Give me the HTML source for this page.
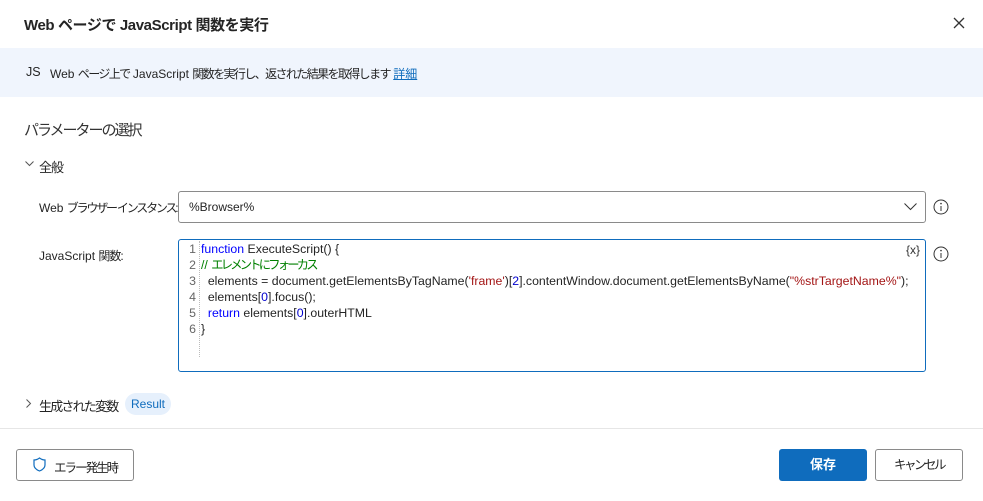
<!DOCTYPE html>
<html><head><meta charset="utf-8"><style>
*{box-sizing:border-box;margin:0;padding:0}
body{width:983px;height:501px;background:#fff;font-family:"Liberation Sans","Noto Sans CJK JP",sans-serif;color:#242424;position:relative;overflow:hidden;font-size:12px}
.a{position:absolute;white-space:nowrap}
.code div{height:16px;line-height:16px}
.ln{display:inline-block;width:18px;text-align:right;color:#666;padding-right:5px;box-sizing:content-box}
.kw{color:#0000ff}.str{color:#a31515}.cm{color:#008000}.num{color:#0000cc}
.j{letter-spacing:-1.6px}
</style></head><body>
<div class="a" style="left:24px;top:14px;font-size:15px;font-weight:bold;letter-spacing:-0.4px">Web ページで JavaScript 関数を実行</div>
<svg class="a" style="left:953px;top:17px" width="12" height="12"><path d="M1 1L11 11M11 1L1 11" stroke="#333" stroke-width="1.3"/></svg>
<div class="a" style="left:0;top:48px;width:983px;height:49px;background:#f0f5fd"></div>
<div class="a" style="left:26px;top:65px;font-size:12.5px">JS</div>
<div class="a" style="left:50px;top:65px;font-size:12px">Web <span class="j">ページ上で</span> JavaScript <span class="j">関数を実行し、返された結果を取得します</span> <span style="color:#0f6cbd;text-decoration:underline">詳細</span></div>
<div class="a" style="left:24px;top:119px;font-size:15px;color:#333;letter-spacing:-2px">パラメーターの選択</div>
<svg class="a" style="left:25px;top:161px" width="9" height="6"><path d="M0.5 0.5L4.5 4.5L8.5 0.5" stroke="#555" fill="none"/></svg>
<div class="a" style="left:39px;top:157px;font-size:13px;letter-spacing:-1px">全般</div>
<div class="a" style="left:39px;top:199px;font-size:12px">Web <span style="letter-spacing:-2.2px">ブラウザー インスタンス:</span></div>
<div class="a" style="left:178px;top:191px;width:748px;height:32px;border:1px solid #8a8a8a;border-radius:3px"></div>
<div class="a" style="left:189px;top:200px;font-size:12px">%Browser%</div>
<svg class="a" style="left:904px;top:203px" width="13" height="8"><path d="M0.5 0.5L6.5 6.5L12.5 0.5" stroke="#333" fill="none"/></svg>
<svg class="a" style="left:933px;top:199px" width="16" height="16"><circle cx="8" cy="8" r="7" stroke="#333" fill="none"/><path d="M8 7V12" stroke="#333"/><circle cx="8" cy="4.6" r=".8" fill="#333"/></svg>
<div class="a" style="left:39px;top:247px;font-size:12px">JavaScript <span style="letter-spacing:-1px">関数:</span></div>
<div class="a" style="left:178px;top:239px;width:748px;height:133px;border:1px solid #0f6cbd;border-radius:3px"></div>
<div class="a" style="left:199px;top:241px;height:116px;border-left:1px dotted #bbb"></div>
<div class="a code" style="left:178px;top:241px;font-size:12.3px">
<div><span class="ln">1</span><span class="kw">function</span> ExecuteScript() {</div>
<div><span class="ln">2</span><span class="cm">// <span style="letter-spacing:-2.8px">エレメントにフォーカス</span></span></div>
<div><span class="ln">3</span>&nbsp; elements = document.getElementsByTagName(<span class="str">'frame'</span>)[<span class="num">2</span>].contentWindow.document.getElementsByName(<span class="str">"%strTargetName%"</span>);</div>
<div><span class="ln">4</span>&nbsp; elements[<span class="num">0</span>].focus();</div>
<div><span class="ln">5</span>&nbsp; <span class="kw">return</span> elements[<span class="num">0</span>].outerHTML</div>
<div><span class="ln">6</span>}</div>
</div>
<div class="a" style="left:906px;top:243px;font-size:12px;color:#333">{x}</div>
<svg class="a" style="left:933px;top:246px" width="16" height="16"><circle cx="8" cy="8" r="7" stroke="#333" fill="none"/><path d="M8 7V12" stroke="#333"/><circle cx="8" cy="4.6" r=".8" fill="#333"/></svg>
<svg class="a" style="left:26px;top:399px" width="6" height="10"><path d="M0.5 0.5L4.5 4.5L0.5 8.5" stroke="#555" fill="none"/></svg>
<div class="a" style="left:39px;top:396px;font-size:13px;letter-spacing:-1.8px">生成された変数</div>
<div class="a" style="left:125px;top:393px;width:46px;height:22px;background:#e6f0fc;border-radius:11px;color:#0f6cbd;font-size:12px;line-height:22px;text-align:center">Result</div>
<div class="a" style="left:0;top:428px;width:983px;height:1px;background:#e6e6e6"></div>
<div class="a" style="left:16px;top:449px;width:118px;height:32px;border:1px solid #8a8a8a;border-radius:3px"></div>
<svg class="a" style="left:33px;top:457px" width="13" height="15"><path d="M6.5 1C4.5 2.5 3 3 1 3V8C1 11 4 13 6.5 14C9 13 12 11 12 8V3C10 3 8.5 2.5 6.5 1Z" stroke="#0f6cbd" fill="none" stroke-width="1.2"/></svg>
<div class="a" style="left:54px;top:457px;font-size:12.5px;letter-spacing:-2px">エラー発生時</div>
<div class="a" style="left:779px;top:449px;width:88px;height:32px;background:#0f6cbd;border-radius:3px;color:#fff;font-weight:bold;font-size:13px;line-height:32px;text-align:center">保存</div>
<div class="a" style="left:875px;top:449px;width:88px;height:32px;border:1px solid #8a8a8a;border-radius:3px;font-size:12.5px;line-height:30px;text-align:center;letter-spacing:-2.5px">キャンセル</div>
</body></html>
